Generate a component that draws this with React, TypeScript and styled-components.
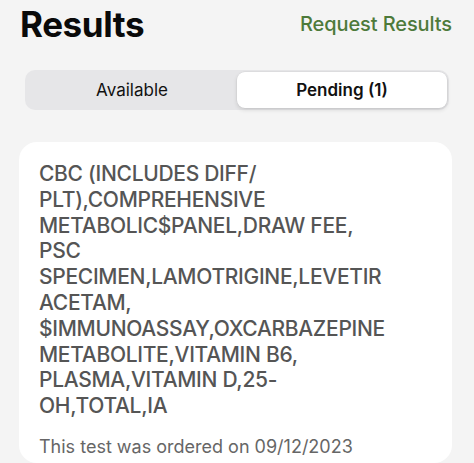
import React, { useState } from 'react';
import styled, { createGlobalStyle } from 'styled-components';

const GlobalStyle = createGlobalStyle`
  html, body {
    margin: 0;
    padding: 0;
    background: #f4f4f4;
  }
  body {
    font-family: Inter, "Noto Sans", "Liberation Sans", sans-serif;
    -webkit-font-smoothing: antialiased;
  }
`;

const tests = [
  'CBC (INCLUDES DIFF/',
  'PLT),COMPREHENSIVE METABOLIC$PANEL,DRAW FEE, PSC SPECIMEN,LAMOTRIGINE,LEVETIRACETAM, $IMMUNOASSAY,OXCARBAZEPINE METABOLITE,VITAMIN B6, PLASMA,VITAMIN D,25-OH,TOTAL,IA',
];

const App: React.FC = () => {
  const [tab, setTab] = useState<'available' | 'pending'>('pending');

  return (
    <>
      <GlobalStyle />
      <Screen>
        <Header>
          <Title>Results</Title>
          <LinkButton>Request Results</LinkButton>
        </Header>

        <Segmented>
          <Segment active={tab === 'available'} onClick={() => setTab('available')}>
            Available
          </Segment>
          <Segment active={tab === 'pending'} onClick={() => setTab('pending')}>
            Pending (1)
          </Segment>
        </Segmented>

        <Card>
          <TestNames>
            {tests[0]}
            <wbr />
            {tests[1]}
          </TestNames>
          <OrderedOn>This test was ordered on 09/12/2023</OrderedOn>
        </Card>
      </Screen>
    </>
  );
};

const Screen = styled.div`
  display: flex;
  flex-direction: column;
  padding: 6px 22px 0 19px;
  height: 463px;
  box-sizing: border-box;
  overflow: hidden;
`;

const Header = styled.header`
  display: flex;
  align-items: center;
  justify-content: space-between;
  padding-left: 1px;
  height: 36px;
`;

const Title = styled.h1`
  margin: 0;
  font-size: 35px;
  font-weight: 700;
  letter-spacing: -0.4px;
  color: #0a0a0a;
`;

const LinkButton = styled.button`
  border: none;
  background: none;
  padding: 0;
  font-family: inherit;
  font-size: 20px;
  font-weight: 500;
  letter-spacing: -0.1px;
  color: #4d7a3a;
  cursor: pointer;
`;

const Segmented = styled.div`
  display: grid;
  grid-template-columns: 1fr 1fr;
  margin: 28px 3px 0 6px;
  padding: 2px;
  height: 40px;
  box-sizing: border-box;
  border-radius: 10px;
  background: #e6e6e8;
`;

const Segment = styled.button<{ active: boolean }>`
  border: none;
  border-radius: 8px;
  font-family: inherit;
  font-size: 17px;
  font-weight: ${(p) => (p.active ? 600 : 400)};
  color: #111;
  background: ${(p) => (p.active ? '#ffffff' : 'transparent')};
  box-shadow: ${(p) =>
    p.active ? '0 0 0 0.5px rgba(0,0,0,0.06), 0 2px 4px rgba(0,0,0,0.12)' : 'none'};
  cursor: pointer;
`;

const Card = styled.section`
  margin-top: 32px;
  flex: 1;
  background: #ffffff;
  border-radius: 18px;
  padding: 19px 20px 0 20px;
`;

const TestNames = styled.p`
  margin: 0;
  max-width: 352px;
  font-size: 21px;
  font-weight: 500;
  letter-spacing: -0.3px;
  line-height: 25.8px;
  color: #555555;
  overflow-wrap: anywhere;
`;

const OrderedOn = styled.p`
  margin: 17px 0 0;
  font-size: 18px;
  font-weight: 400;
  color: #666666;
`;

export default App;
